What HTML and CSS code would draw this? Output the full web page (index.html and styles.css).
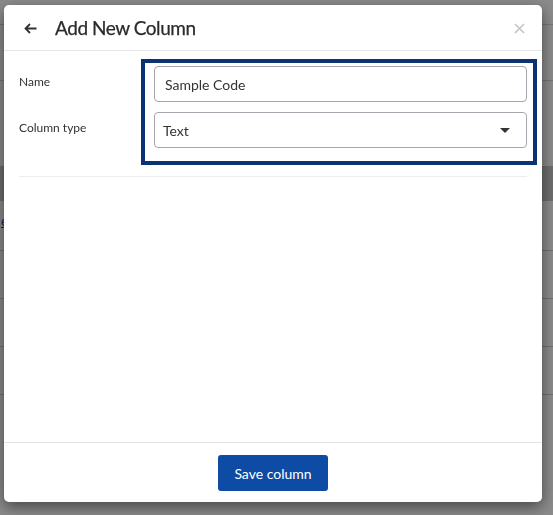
FILE: index.html
```html
<!DOCTYPE html>
<html>
<head>
<meta charset="utf-8">
<link rel="stylesheet" href="styles.css">
</head>
<body>
<div class="page">
  <div class="page-top"></div>
  <div class="page-sub"></div>
  <div class="page-gap"></div>
  <div class="page-thead"></div>
  <div class="page-row first"><span class="link">e</span></div>
  <div class="page-row"></div>
  <div class="page-row"></div>
  <div class="page-row"></div>
  <div class="page-rest"></div>
</div>
<div class="overlay"></div>
<div class="modal">
  <div class="modal-header">
    <svg class="back" width="13" height="11" viewBox="0 0 13 11"><path d="M12.5 5.5H1.8M6 1L1.5 5.5L6 10" fill="none" stroke="#333" stroke-width="1.8"/></svg>
    <h1 class="title">Add New Column</h1>
    <svg class="close" width="11" height="11" viewBox="0 0 11 11"><path d="M1 1L10 10M10 1L1 10" stroke="#c4c4c4" stroke-width="1.6"/></svg>
  </div>
  <div class="modal-body">
    <div class="form">
      <div class="highlight"></div>
      <label class="label">Name</label>
      <div class="field"><span class="value">Sample Code</span></div>
      <label class="label">Column type</label>
      <div class="field select"><span class="value sel">Text</span><span class="caret"></span></div>
    </div>
    <div class="divider"></div>
  </div>
  <div class="modal-footer">
    <button class="btn">Save column</button>
  </div>
</div>
</body>
</html>
```
FILE: styles.css
```css
html, body {
  margin: 0;
  padding: 0;
  height: 100%;
  overflow: hidden;
}
body {
  font-family: Lato, "Open Sans", sans-serif;
  background: #fff;
  color: #333;
}
.page {
  display: flex;
  flex-direction: column;
  height: 515px;
}
.page-top {
  height: 24px;
  border-bottom: 1px solid #d8d8d8;
}
.page-sub {
  height: 55px;
  border-bottom: 1px solid #d8d8d8;
}
.page-gap {
  height: 85px;
}
.page-thead {
  height: 35px;
  background: #cbcbcb;
}
.page-row {
  height: 47px;
  border-bottom: 1px solid #cfcfcf;
}
.page-row.first {
  height: 49px;
}
.link {
  display: block;
  margin: 12px 0 0 0;
  padding-left: 1px;
  color: #1a4aa0;
  font-size: 13px;
  text-decoration: underline;
}
.page-rest {
  flex: 1;
}
.overlay {
  position: fixed;
  inset: 0;
  background: rgba(0, 0, 0, 0.45);
}
.modal {
  position: absolute;
  left: 4px;
  top: 5px;
  width: 538px;
  height: 497px;
  background: #fff;
  border-radius: 5px;
  box-shadow: 0 5px 15px rgba(0, 0, 0, 0.5);
  display: flex;
  flex-direction: column;
}
.modal-header {
  height: 45px;
  border-bottom: 1px solid #e5e5e5;
  display: flex;
  align-items: center;
  padding: 0 17px 0 20px;
}
.back {
  margin-right: 18px;
  margin-top: 1px;
}
.title {
  margin: 0;
  font-size: 19px;
  font-weight: 400;
  color: #2b2b2b;
  flex: 1;
  letter-spacing: -0.45px;
  -webkit-text-stroke: 0.25px #2b2b2b;
}
.close {
  margin-top: 1px;
}
.modal-body {
  flex: 1;
  padding: 15px 15px 0;
}
.form {
  position: relative;
  display: grid;
  grid-template-columns: 135px 1fr;
  row-gap: 10px;
}
.highlight {
  position: absolute;
  left: 122px;
  top: -7px;
  right: -10px;
  bottom: -17px;
  border: 4px solid #0b3372;
  pointer-events: none;
}
.label {
  font-size: 12px;
  color: #333;
  padding-top: 8px;
}
.field {
  height: 36px;
  box-sizing: border-box;
  border: 1px solid #a6a6ae;
  border-radius: 4px;
  display: flex;
  align-items: center;
  padding: 0 10px;
}
.value {
  font-size: 14px;
  color: #333;
  padding-top: 1px;
}
.value.sel {
  margin-left: -2px;
  flex: 1;
}
.caret {
  width: 0;
  height: 0;
  border-left: 5px solid transparent;
  border-right: 5px solid transparent;
  border-top: 5px solid #333;
  margin-right: 6px;
}
.divider {
  margin-top: 28px;
  border-top: 1px solid #ececf2;
}
.modal-footer {
  border-top: 1px solid #e3e3e3;
  height: 60px;
  display: flex;
  justify-content: center;
  padding-top: 12px;
  box-sizing: border-box;
}
.btn {
  width: 110px;
  height: 36px;
  background: #0e4ba5;
  color: #fff;
  border: none;
  border-radius: 3px;
  font-family: Lato, sans-serif;
  font-size: 14px;
  padding: 0;
}
```
